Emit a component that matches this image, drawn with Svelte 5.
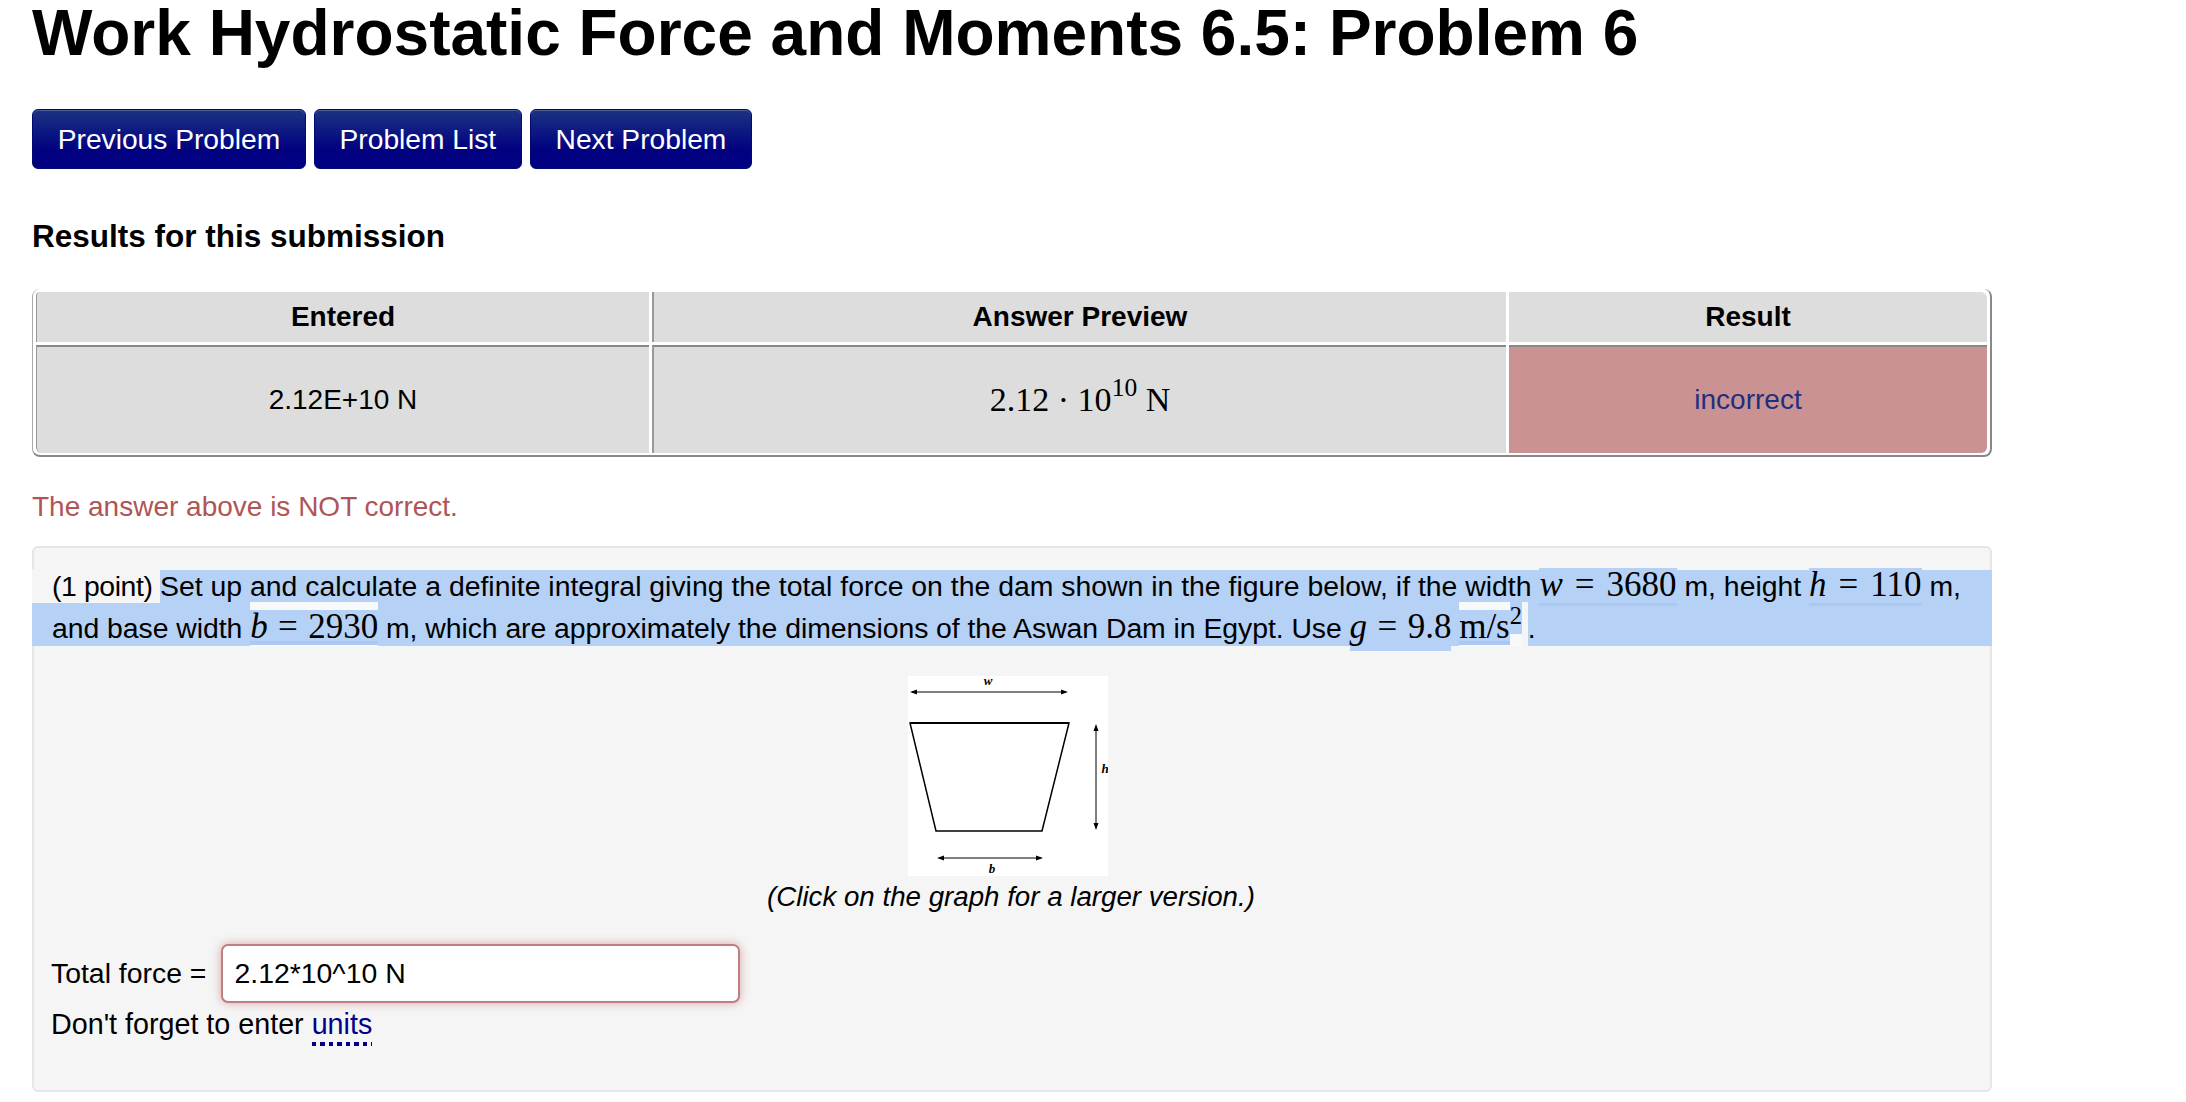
<script>
  const columns = ["Entered", "Answer Preview", "Result"];
  const navButtons = ["Previous Problem", "Problem List", "Next Problem"];
  let answer = "2.12*10^10 N";
</script>

<div class="page">
  <h1>Work Hydrostatic Force and Moments 6.5: Problem 6</h1>

  <div class="nav">
    {#each navButtons as label}
      <button class="nav-button">{label}</button>
    {/each}
  </div>

  <h2>Results for this submission</h2>

  <div class="results">
    <div class="cell head c1">{columns[0]}</div>
    <div class="cell head c2">{columns[1]}</div>
    <div class="cell head c3">{columns[2]}</div>
    <div class="cell body c1">2.12E+10 N</div>
    <div class="cell body c2"><span class="math big">2.12 · 10<sup>10</sup> N</span></div>
    <div class="cell body c3 bad">incorrect</div>
  </div>

  <p class="message">The answer above is NOT correct.</p>

  <div class="problem">
    <div class="statement">
      <div class="line first"><span class="plain">(1 point)&nbsp;</span>Set up and calculate a definite integral giving the total force on the dam shown in the figure below, if the width <span class="math top"><i>w</i><span class="eq">=</span>3680</span> m, height <span class="math top"><i>h</i><span class="eq">=</span>110</span> m,</div>
      <div class="line second">and base width <span class="math low"><i>b</i><span class="eq">=</span>2930</span> m, which are approximately the dimensions of the Aswan Dam in Egypt. Use <span class="math tail"><i>g</i><span class="eq">=</span>9.8</span> <span class="math low">m/s</span><span class="math sup-cell"><sup>2</sup></span><span class="math gap"></span>.</div>
    </div>

    <figure class="figure">
      <svg width="200" height="200" viewBox="0 0 200 200">
        <rect width="200" height="200" fill="#fff" />
        <g stroke="#000" fill="none">
          <path d="M2 47H161L134 155H28Z" stroke-width="1.5" />
          <path d="M2 47H161" stroke-width="2" />
          <path d="M4 16H158M188 50V152M31 182H133" stroke-width="1" />
        </g>
        <g fill="#000">
          <path d="M2 16l7-2.500v5zM160 16l-7-2.500v5zM188 48l-2.500 7h5zM188 154l-2.500-7h5zM29 182l7-2.500v5zM135 182l-7-2.500v5z" />
          <text x="80" y="9" class="fig-label">w</text>
          <text x="197" y="97" class="fig-label">h</text>
          <text x="84" y="197" class="fig-label">b</text>
        </g>
      </svg>
      <figcaption>(Click on the graph for a larger version.)</figcaption>
    </figure>

    <div class="answer-row">
      <label for="ans">Total force =</label>
      <input id="ans" type="text" bind:value={answer} />
    </div>
    <div class="hint">Don't forget to enter <span class="units">units</span></div>
  </div>
</div>

<style>
  :global(body) {
    margin: 0;
    background: #fff;
    font-family: "Liberation Sans", Arial, sans-serif;
    color: #000;
    overflow: hidden;
  }
  .page {
    width: 1960px;
    height: 1102px;
    padding-left: 32px;
    overflow: hidden;
  }
  h1 {
    margin: 0;
    height: 66px;
    font-size: 64px;
    line-height: 66px;
    font-weight: 700;
  }
  .nav {
    display: flex;
    gap: 8px;
    margin-top: 43px;
  }
  .nav-button {
    height: 60px;
    padding: 0 24.700px;
    border: 1px solid #000a70;
    border-radius: 6px;
    background: linear-gradient(#1c3383, #000080 70%);
    box-shadow: inset 0 1px 0 rgba(255, 255, 255, 0.2);
    color: #fff;
    font-family: inherit;
    font-size: 28.200px;
  }
  h2 {
    margin: 49px 0 0;
    font-size: 31.500px;
    line-height: 36px;
    font-weight: 700;
  }
  .results {
    display: grid;
    grid-template-columns: 613px 854px 478px;
    grid-template-rows: 50px 108px;
    gap: 3px;
    width: 1960px;
    height: 168px;
    margin-top: 35px;
    padding: 3px;
    box-sizing: border-box;
    border-right: 2px solid #888;
    border-bottom: 2px solid #888;
    border-left: 1px solid #aaa;
    border-radius: 8px;
  }
  .cell {
    display: flex;
    align-items: center;
    justify-content: center;
    background: #ddd;
    font-size: 28px;
  }
  .head {
    font-weight: 700;
  }
  .body {
    border-top: 2px solid #888;
    box-sizing: border-box;
  }
  .c1 {
    border-left: 1px solid #999;
  }
  .c2 {
    border-left: 2px solid #999;
  }
  .body.c1 {
    border-bottom-left-radius: 6px;
  }
  .head.c1 {
    border-top-left-radius: 4px;
  }
  .head.c3 {
    border-top-right-radius: 6px;
  }
  .bad {
    background: #ca9292;
    color: #1e2f7f;
    border-bottom-right-radius: 6px;
  }
  .math {
    font-family: "Liberation Serif", "Times New Roman", serif;
    font-size: 35px;
    line-height: 0;
  }
  .big {
    font-size: 34px;
    white-space: pre;
    line-height: 1;
  }
  .big sup {
    font-size: 0.75em;
  }
  sup {
    font-size: 0.7em;
    line-height: 0;
    vertical-align: 0.58em;
  }
  .message {
    margin: 32px 0 0;
    font-size: 28px;
    line-height: 36px;
    color: #b05555;
  }
  .problem {
    width: 1960px;
    height: 546px;
    margin-top: 21px;
    box-sizing: border-box;
    border: 2px solid #e6e6e6;
    border-radius: 6px;
    background: #f5f5f5;
    font-size: 28.400px;
  }
  .statement {
    margin: 22px -2px 0;
  }
  .line {
    background: #b5d1f6;
    white-space: nowrap;
  }
  .first {
    height: 32px;
    line-height: 32px;
  }
  .first .eq {
    margin: 0 12px;
  }
  .second {
    height: 44px;
    box-sizing: border-box;
    padding: 9px 0 0 20px;
    line-height: 34px;
    letter-spacing: -0.050px;
  }
  .plain {
    padding: 1px 0 1px 20px;
    background: #f5f5f5;
    letter-spacing: -0.400px;
  }
  .eq {
    margin: 0 10.500px;
  }
  .top {
    padding-bottom: 2px;
    background: linear-gradient(transparent 3px, #b5d1f6 3px, #b5d1f6 calc(100% - 3px), #aac8f2 calc(100% - 3px));
  }
  .low {
    padding: 5px 0 1px;
    background: linear-gradient(#f8f9fb 8px, #b5d1f6 8px, #b5d1f6 calc(100% - 6px), #aac8f2 calc(100% - 6px), #aac8f2 calc(100% - 2px), #f8f9fb calc(100% - 2px));
  }
  .tail {
    padding-bottom: 5px;
    background: #b5d1f6;
  }
  .sup-cell {
    padding: 5px 0 1px;
    background: #f8f9fb;
  }
  .sup-cell sup {
    padding: 1px 0 5px;
    background: #b5d1f6;
  }
  .gap {
    padding: 5px 3px 1px;
    background: #f5f5f5;
  }
  .figure {
    display: flex;
    flex-direction: column;
    align-items: center;
    margin: 30px 2px 0 0;
  }
  .figure svg {
    display: block;
    margin-right: 6px;
  }
  .fig-label {
    font-family: "Liberation Serif", serif;
    font-style: italic;
    font-weight: 700;
    font-size: 13px;
    text-anchor: middle;
  }
  figcaption {
    font-style: italic;
    font-size: 27.700px;
    line-height: 41px;
  }
  .answer-row {
    display: flex;
    align-items: center;
    gap: 15px;
    margin: 27px 0 0 17px;
  }
  input {
    width: 519px;
    height: 59px;
    padding: 0 11px;
    box-sizing: border-box;
    border: 2px solid #bf7f7f;
    border-radius: 7px;
    box-shadow: 0 0 10px rgba(190, 90, 90, 0.5);
    background: #fff;
    font-family: inherit;
    font-size: 28.400px;
    color: #000;
    outline: none;
  }
  .hint {
    margin: 1px 0 0 17px;
    font-size: 28.700px;
    line-height: 40px;
  }
  .units {
    padding-bottom: 6px;
    color: #00008b;
    background: repeating-linear-gradient(90deg, #00008b 0 4.500px, transparent 4.500px 8.500px) left bottom / 100% 4px no-repeat;
  }
</style>
